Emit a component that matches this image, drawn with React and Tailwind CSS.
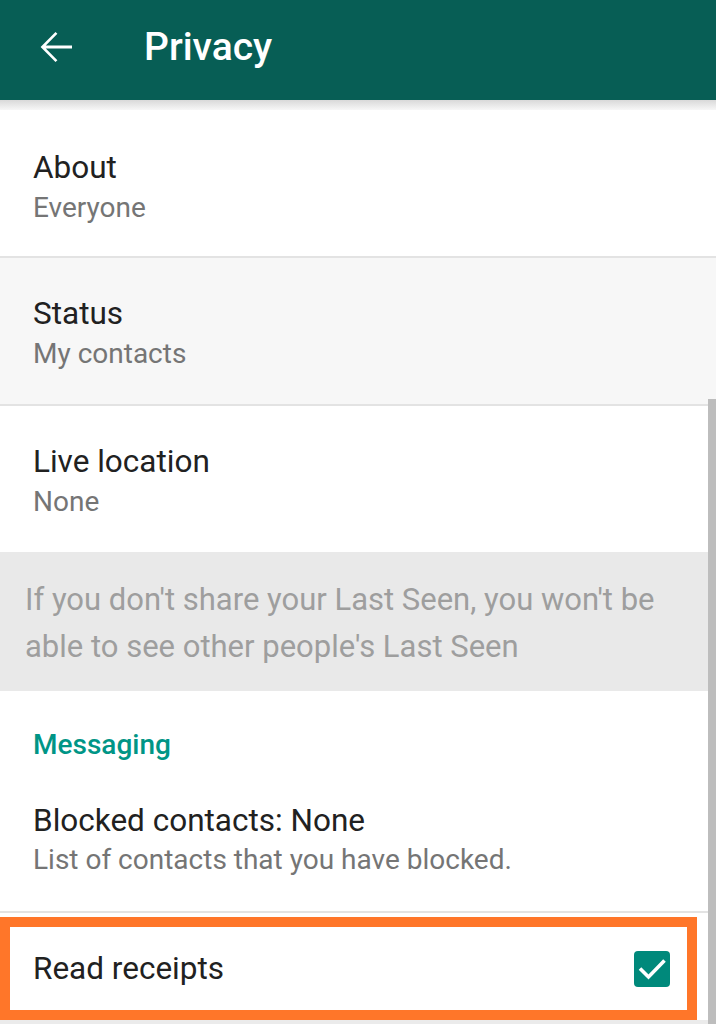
import React from 'react'

const font = { fontFamily: 'Roboto, "Noto Sans", sans-serif' }

function Row({ title, subtitle, shaded, first }) {
  return (
    <div className={`px-[33px] ${first ? 'pt-[38px] pb-[28px]' : 'pt-[36px] pb-[30px]'} border-b-2 border-[#e3e3e3] ${shaded ? 'bg-[#f7f7f7]' : 'bg-white'}`}>
      <div className="text-[31.5px] leading-[40px] text-[#212121]">{title}</div>
      <div className="text-[28px] leading-[40px] text-[#757575]">{subtitle}</div>
    </div>
  )
}

export default function App() {
  return (
    <div className="relative w-[716px] h-[1024px] overflow-hidden bg-white" style={font}>
      {/* Toolbar */}
      <header className="h-[100px] bg-[#075e55] flex items-center">
        <svg width="48" height="48" viewBox="0 0 24 24" className="ml-[32px] mt-[-6px]" fill="#fff">
          <path d="M20 11.2H6.9l5.8-5.8-.95-.95L4.3 12l7.45 7.55.95-.95-5.8-5.8H20z" />
        </svg>
        <h1 className="ml-[64px] mt-[-6px] text-[39px] font-medium text-white">Privacy</h1>
      </header>
      <div className="h-[12px] bg-gradient-to-b from-[#d9d9d9] to-[#f7f7f7] border-b-2 border-[#e6e6e6]" />

      <div className="-mt-[2px]">
        <Row title="About" subtitle="Everyone" first />
        <Row title="Status" subtitle="My contacts" shaded />
        <Row title="Live location" subtitle="None" />
      </div>

      {/* Info */}
      <div className="-mt-[2px] h-[139px] bg-[#e9e9e9] px-[25px] pt-[24px] text-[31px] leading-[47px] text-[#9e9e9e]">
        If you don't share your Last Seen, you won't be able to see other people's Last Seen
      </div>

      {/* Messaging */}
      <div className="px-[33px] pt-[36px] text-[28px] leading-[36px] font-medium text-[#009586]">Messaging</div>
      <div className="px-[33px] pt-[38px] pb-[32px] border-b-2 border-[#e3e3e3]">
        <div className="text-[31.5px] leading-[40px] text-[#212121]">Blocked contacts: None</div>
        <div className="text-[28px] leading-[38px] text-[#757575]">List of contacts that you have blocked.</div>
      </div>

      <div className="h-[4px]" />
      <div className="w-[697px] h-[103px] border-[10px] border-[#ff7629] flex items-center pl-[23px] pr-[17px]">
        <span className="flex-1 text-[31.5px] text-[#212121]">Read receipts</span>
        <span className="w-[36px] h-[36px] rounded-[4px] bg-[#00897b]">
          <svg width="36" height="36" viewBox="0 0 36 36" fill="none" stroke="#fff" strokeWidth="3.6">
            <path d="M6 17.5l8.5 8.5L30.5 9.5" />
          </svg>
        </span>
      </div>
      <div className="h-[10px] bg-[#ebebeb]" />

      {/* Scrollbar */}
      <div className="absolute right-0 top-[399px] w-[8px] bottom-0 bg-[#bdbdbd]" />
    </div>
  )
}
